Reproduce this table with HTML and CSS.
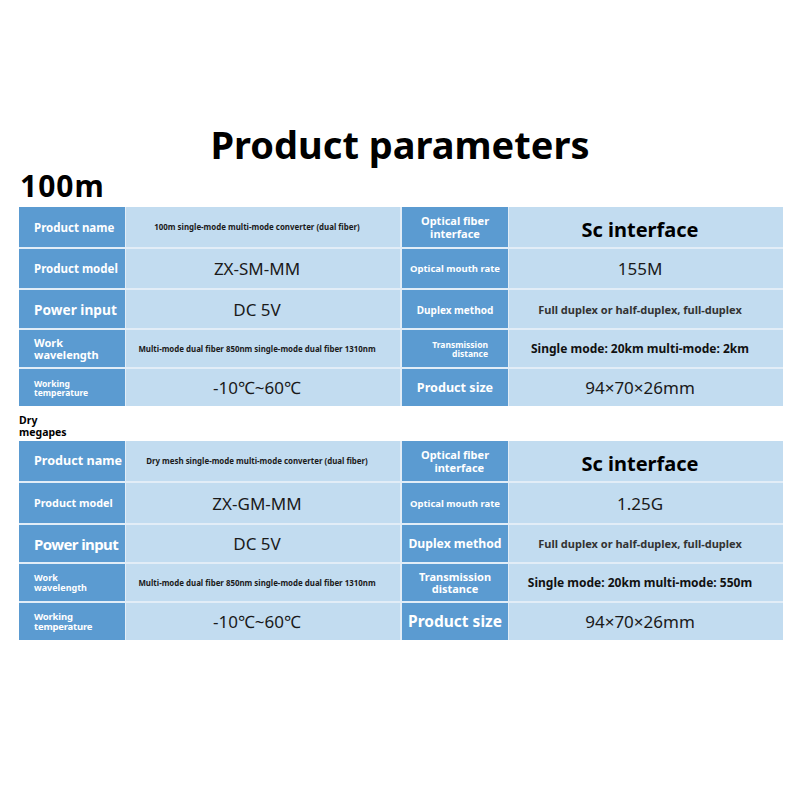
FILE: index.html
```html
<!DOCTYPE html>
<html>
<head>
<meta charset="utf-8">
<link rel="stylesheet" href="styles.css">
</head>
<body>
<div class="page">
  <h1 class="title">Product parameters</h1>
  <div class="section-head big">100m</div>
  <div class="table t1">
    <div class="lab l1 fs115">Product name</div>
    <div class="val tiny">100m single-mode multi-mode converter (dual fiber)</div>
    <div class="lab r c fs11 two">Optical fiber<br>interface</div>
    <div class="val sc">Sc interface</div>

    <div class="lab l1 fs115">Product model</div>
    <div class="val reg">ZX-SM-MM</div>
    <div class="lab r c fs95">Optical mouth rate</div>
    <div class="val reg">155M</div>

    <div class="lab l1 fs14">Power input</div>
    <div class="val reg">DC 5V</div>
    <div class="lab r c fs10">Duplex method</div>
    <div class="val dup">Full duplex or half-duplex, full-duplex</div>

    <div class="lab l1 fs11 two">Work<br>wavelength</div>
    <div class="val tiny">Multi-mode dual fiber 850nm single-mode dual fiber 1310nm</div>
    <div class="lab r rt fs85 two">Transmission<br>distance</div>
    <div class="val dist">Single mode: 20km multi-mode: 2km</div>

    <div class="lab l1 fs85 two">Working<br>temperature</div>
    <div class="val reg">-10℃~60℃</div>
    <div class="lab r c fs125">Product size</div>
    <div class="val reg">94×70×26mm</div>
  </div>

  <div class="section-head small">Dry<br>megapes</div>

  <div class="table t2">
    <div class="lab l1 fs125">Product name</div>
    <div class="val tiny">Dry mesh single-mode multi-mode converter (dual fiber)</div>
    <div class="lab r c fs11 two">Optical fiber<br>&nbsp;&nbsp;&nbsp;interface</div>
    <div class="val sc">Sc interface</div>

    <div class="lab l1 fs108">Product model</div>
    <div class="val reg">ZX-GM-MM</div>
    <div class="lab r c fs95">Optical mouth rate</div>
    <div class="val reg">1.25G</div>

    <div class="lab l1 fs15n">Power input</div>
    <div class="val reg">DC 5V</div>
    <div class="lab r c fs12">Duplex method</div>
    <div class="val dup">Full duplex or half-duplex, full-duplex</div>

    <div class="lab l1 fs9 two">Work<br>wavelength</div>
    <div class="val tiny">Multi-mode dual fiber 850nm single-mode dual fiber 1310nm</div>
    <div class="lab r c fs11 two">Transmission<br>distance</div>
    <div class="val dist">Single mode: 20km multi-mode: 550m</div>

    <div class="lab l1 fs95n two">Working<br>temperature</div>
    <div class="val reg">-10℃~60℃</div>
    <div class="lab r c fs155">Product size</div>
    <div class="val reg">94×70×26mm</div>
  </div>
</div>
</body>
</html>
```
FILE: styles.css
```css
html, body {
  margin: 0;
  padding: 0;
  background: #ffffff;
}
body {
  font-family: "Noto Sans", "Open Sans", sans-serif;
  color: #111;
}
.page {
  width: 800px;
  height: 800px;
  padding-top: 119px;
  box-sizing: border-box;
}
.title {
  margin: 0;
  text-align: center;
  font-size: 38px;
  line-height: 50px;
  font-weight: 700;
  color: #000;
}
.section-head {
  margin-left: 20px;
  font-weight: 700;
  color: #000;
}
.section-head.big {
  font-size: 30px;
  line-height: 30px;
  letter-spacing: 1px;
  margin-top: 2px;
  margin-bottom: 6px;
}
.section-head.small {
  font-size: 10.5px;
  line-height: 12px;
  margin-left: 19px;
  margin-top: 8px;
  margin-bottom: 3px;
}
.table {
  display: grid;
  grid-template-columns: 106px 274px 107px 274px;
  column-gap: 1px;
  row-gap: 2px;
  margin-left: 19px;
  width: 764px;
  background: #e2edf7;
}
.t1 {
  grid-template-rows: 40px 39px 38px 37px 37px;
}
.t2 {
  grid-template-rows: 40px 40px 37px 37px 37px;
}
.lab {
  background: #5b9bd1;
  color: #ffffff;
  font-weight: 700;
  display: flex;
  align-items: center;
  line-height: 1;
  white-space: nowrap;
  padding-top: 1px;
}
.lab.l1 {
  padding-left: 15px;
}
.lab.r {
  margin-left: 1px;
}
.lab.c {
  justify-content: center;
  text-align: center;
}
.lab.rt {
  justify-content: flex-end;
  text-align: right;
  padding-right: 20px;
}
.lab.two {
  line-height: 1.1;
}
.val {
  background: #c2dcf0;
  display: flex;
  align-items: center;
  justify-content: center;
  text-align: center;
  padding-right: 12px;
  color: #1a1a1a;
  white-space: nowrap;
}
.fs85 { font-size: 8.5px; }
.fs9 { font-size: 9px; }
.fs95 { font-size: 9.5px; }
.fs95n { font-size: 9.5px; letter-spacing: -0.2px; }
.fs10 { font-size: 10px; }
.fs108 { font-size: 10.8px; }
.fs11 { font-size: 11px; }
.fs115 { font-size: 11.5px; }
.fs12 { font-size: 12.2px; }
.fs125 { font-size: 12.6px; }
.fs14 { font-size: 13.7px; }
.fs15n { font-size: 15px; letter-spacing: -0.6px; }
.fs155 { font-size: 15.5px; }
.tiny {
  font-size: 7.9px;
  font-weight: 700;
}
.reg {
  font-size: 17px;
  font-weight: 400;
  color: #1a1a1a;
}
.sc {
  font-size: 20px;
  font-weight: 700;
  color: #000;
  padding-top: 5px;
}
.dup {
  font-size: 11px;
  font-weight: 700;
  color: #333;
}
.dist {
  font-size: 12px;
  font-weight: 700;
  color: #111;
}
```
